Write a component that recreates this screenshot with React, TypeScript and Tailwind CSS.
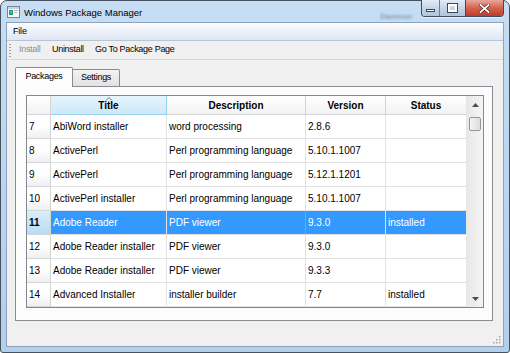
import React from "react";

interface PackageRow {
  n: number;
  title: string;
  desc: string;
  ver: string;
  status: string;
}

const ROWS: PackageRow[] = [
  { n: 7, title: "AbiWord installer", desc: "word processing", ver: "2.8.6", status: "" },
  { n: 8, title: "ActivePerl", desc: "Perl programming language", ver: "5.10.1.1007", status: "" },
  { n: 9, title: "ActivePerl", desc: "Perl programming language", ver: "5.12.1.1201", status: "" },
  { n: 10, title: "ActivePerl installer", desc: "Perl programming language", ver: "5.10.1.1007", status: "" },
  { n: 11, title: "Adobe Reader", desc: "PDF viewer", ver: "9.3.0", status: "installed" },
  { n: 12, title: "Adobe Reader installer", desc: "PDF viewer", ver: "9.3.0", status: "" },
  { n: 13, title: "Adobe Reader installer", desc: "PDF viewer", ver: "9.3.3", status: "" },
  { n: 14, title: "Advanced Installer", desc: "installer builder", ver: "7.7", status: "installed" },
];

const SELECTED = 11;

const GRID = "grid grid-cols-[24px_116px_139px_80px_80px]";

function AppIcon() {
  return (
    <svg width="13" height="12" viewBox="0 0 13 12">
      <rect x="0.5" y="0.5" width="12" height="11" fill="#f4f6f8" stroke="#7a8594" />
      <rect x="1" y="1" width="11" height="2" fill="#c9d3de" />
      <rect x="2" y="4" width="4" height="5" fill="#2f9a6c" />
      <rect x="3" y="5" width="2" height="2" fill="#4fb3e8" />
      <rect x="7" y="4" width="4" height="1" fill="#b5bec9" />
      <rect x="7" y="6" width="3" height="1" fill="#b5bec9" />
    </svg>
  );
}

function WindowButtons() {
  return (
    <div className="flex h-[17px] -mt-px rounded-b-[4px] border border-t-0 border-[#3c4b5d] overflow-hidden shadow-[0_1px_0_rgba(255,255,255,0.6)]">
      <div className="w-[17px] flex items-end justify-center pb-[4px] bg-gradient-to-b from-[#e3ecf6] via-[#c7d6e8] to-[#aec3da]">
        <div className="w-[9px] h-[3px] bg-white border border-[#3a4658]" />
      </div>
      <div className="w-[26px] flex items-center justify-center border-l border-[#6d7f93] bg-gradient-to-b from-[#e3ecf6] via-[#c7d6e8] to-[#aec3da]">
        <div className="w-[9px] h-[8px] border-[2px] border-white outline outline-1 outline-[#3a4658] bg-transparent" />
      </div>
      <div className="w-[38px] flex items-center justify-center border-l border-[#6d3a34] bg-gradient-to-b from-[#e9a799] via-[#d4624f] to-[#c0392a]">
        <svg width="11" height="9" viewBox="0 0 11 9">
          <path d="M1.5 1 L9.5 8 M9.5 1 L1.5 8" stroke="#4a1f1a" strokeWidth="3.2" strokeLinecap="square" />
          <path d="M1.5 1 L9.5 8 M9.5 1 L1.5 8" stroke="#ffffff" strokeWidth="1.8" strokeLinecap="square" />
        </svg>
      </div>
    </div>
  );
}

function Triangle({ up }: { up: boolean }) {
  return (
    <svg width="7" height="4" viewBox="0 0 7 4">
      <path d={up ? "M0 4 L3.5 0 L7 4 Z" : "M0 0 L3.5 4 L7 0 Z"} fill="#4d4d4d" />
    </svg>
  );
}

function Scrollbar() {
  return (
    <div className="w-[17px] flex flex-col border-l border-[#e6e6e6] bg-gradient-to-r from-[#e8e8e8] to-[#f4f4f4]">
      <div className="h-[17px] flex items-center justify-center">
        <Triangle up />
      </div>
      <div className="flex-1 pt-[4px] px-[2px]">
        <div className="h-[14px] rounded-[2px] border border-[#959595] bg-gradient-to-r from-[#f4f4f4] to-[#dcdcdc]" />
      </div>
      <div className="h-[17px] flex items-center justify-center">
        <Triangle up={false} />
      </div>
    </div>
  );
}

function HeaderRow() {
  const headCell =
    "h-[19px] flex items-center justify-center border-r border-b border-[#d5d5d5] bg-gradient-to-b from-white to-[#f1f2f4] font-bold";
  return (
    <div className={GRID}>
      <div className={headCell} />
      <div className="relative h-[19px] flex items-center justify-center border-r border-b border-[#96d0ef] bg-gradient-to-b from-[#e6f4fc] to-[#cde8f8] font-bold">
        <svg className="absolute top-[1px] left-1/2 -translate-x-1/2" width="7" height="4" viewBox="0 0 7 4">
          <path d="M0.5 3.5 L3.5 0.5 L6.5 3.5" fill="none" stroke="#6b7c8c" strokeWidth="1" />
        </svg>
        Title
      </div>
      <div className={headCell}>Description</div>
      <div className={headCell}>Version</div>
      <div className={headCell + " border-r-0"}>Status</div>
    </div>
  );
}

function DataRow({ row }: { row: PackageRow }) {
  const sel = row.n === SELECTED;
  const cell =
    "h-[24px] flex items-center pl-[2px] border-r border-b border-[#e2e2e2] whitespace-nowrap overflow-hidden " +
    (sel ? "bg-[#3399ff] text-white" : "bg-white text-black");
  return (
    <div className={GRID}>
      <div
        className={
          "h-[24px] flex items-center pl-[2px] border-r border-b border-[#d5d5d5] " +
          (sel
            ? "bg-gradient-to-b from-[#d8eefb] to-[#b9dcf3] font-bold"
            : "bg-gradient-to-b from-white via-white to-[#eeeff1]")
        }
      >
        {row.n}
      </div>
      <div className={cell}>{row.title}</div>
      <div className={cell + (sel ? " border-r-[#8ca0b8]" : "")}>{row.desc}</div>
      <div className={cell}>{row.ver}</div>
      <div className={cell + " border-r-0"}>{row.status}</div>
    </div>
  );
}

export default function App() {
  return (
    <div className="w-[510px] h-[353px] overflow-hidden bg-white font-['Liberation_Sans',Arial,sans-serif] text-black">
      <div className="w-full h-full flex flex-col px-[5px] pb-[5px] border border-[#46525f] rounded-t-[7px] rounded-b-[3px] bg-gradient-to-b from-[#c6ddf3] via-[#bcd6ef] to-[#b3cfeb]">
        {/* title bar */}
        <div className="h-[21px] flex items-start shrink-0">
          <div className="pl-[1px] pt-[5px]">
            <AppIcon />
          </div>
          <span className="ml-[4px] mt-[6px] text-[9.5px] leading-[12px] text-black">Windows Package Manager</span>
          <div className="flex-1" />
          <span className="mt-[10px] mr-[9px] text-[8px] font-bold text-[#4e5e70]/50 blur-[1px]">Daemon</span>
          <WindowButtons />
        </div>

        {/* client area */}
        <div className="flex-1 flex flex-col border border-[#8da3bb] bg-[#f0f0f0]">
          <div className="h-[18px] shrink-0 flex items-center pl-[6px] border-b border-[#b8c5d6] bg-gradient-to-b from-[#fbfcfe] to-[#dfe7f3] text-[9px] tracking-[-0.2px]">
            File
          </div>

          <div className="h-[19px] shrink-0 flex items-center border-b border-[#d8d8d8] text-[9px] tracking-[-0.3px]">
            <div className="ml-[2px] w-[2px] h-[13px] bg-[repeating-linear-gradient(to_bottom,#a0a0a0_0px,#a0a0a0_1px,transparent_1px,transparent_3px)]" />
            <span className="ml-[8px] w-[33px] text-[#8d8d8d]">Install</span>
            <span className="w-[43px]">Uninstall</span>
            <span>Go To Package Page</span>
          </div>

          {/* tabs */}
          <div className="mt-[7px] ml-[8px] h-[19px] flex items-end text-[9px] tracking-[-0.3px]">
            <div className="relative z-10 h-[20px] -mb-px w-[58px] flex items-center justify-center pb-[1px] border border-b-0 border-[#898c95] bg-[#fcfcfc] rounded-t-[2px]">
              Packages
            </div>
            <div className="h-[17px] w-[47px] flex items-center justify-center border-t border-r border-[#898c95] bg-gradient-to-b from-[#f3f3f3] to-[#e2e2e2] rounded-tr-[2px]">
              Settings
            </div>
          </div>

          <div className="ml-[8px] w-[478px] h-[235px] shrink-0 border border-[#898c95] bg-[#fcfcfc] pl-[10px] pt-[8px]">
            <div className="w-[458px] h-[213px] flex border border-[#828790] bg-white text-[10px]">
              <div className="flex flex-col">
                <HeaderRow />
                {ROWS.map((r) => (
                  <DataRow key={r.n} row={r} />
                ))}
              </div>
              <Scrollbar />
            </div>
          </div>

          {/* status area */}
          <div className="flex-1 flex items-end justify-end pr-[2px] pb-[2px]">
            <svg width="8" height="8" viewBox="0 0 8 8">
              {[
                [6, 0], [6, 3], [3, 3], [6, 6], [3, 6], [0, 6],
              ].map(([x, y], i) => (
                <rect key={i} x={x} y={y} width="1.5" height="1.5" fill="#a6a6a6" />
              ))}
            </svg>
          </div>
        </div>
      </div>
    </div>
  );
}
